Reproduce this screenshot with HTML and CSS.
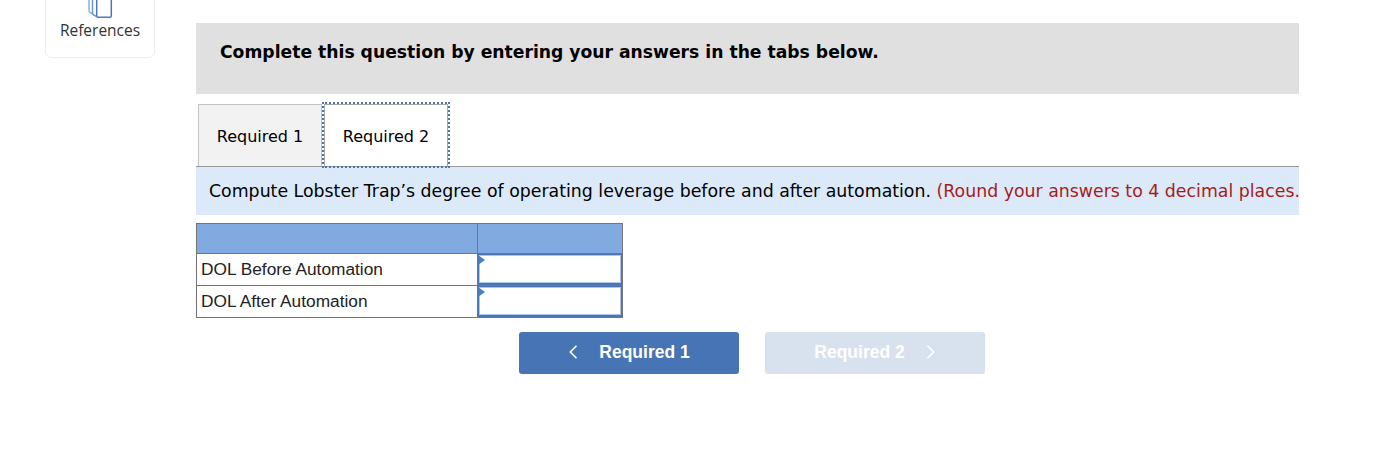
FILE: index.html
```html
<!DOCTYPE html>
<html lang="en">
<head>
<meta charset="utf-8">
<title>Required 2</title>
<link rel="stylesheet" href="styles.css">
</head>
<body>
<div class="page">
  <aside class="side">
    <div class="ref-card">
      <svg class="ref-icon" width="26" height="23" viewBox="0 0 26 23" fill="none" aria-hidden="true">
        <path d="M2 0v13.5q0 1.5 1.5 2.2l2.5 1.3" stroke="#8fb0dc" stroke-width="1.5"/>
        <path d="M5.5 0v16q0 1.5 1.5 2.2l2.5 1.3" stroke="#6d96cf" stroke-width="1.5"/>
        <rect x="9.7" y="-4" width="14.6" height="24.3" rx="1.5" fill="#fff" stroke="#4a78b8" stroke-width="1.5"/>
      </svg>
      <span class="ref-label">References</span>
    </div>
  </aside>
  <main class="main">
    <div class="banner"><h1 class="banner-title">Complete this question by entering your answers in the tabs below.</h1></div>
    <div class="tabs">
      <div class="tab">Required 1</div>
      <div class="tab tab-active">Required 2</div>
    </div>
    <div class="prompt">
      <p class="prompt-text">Compute Lobster Trap’s degree of operating leverage before and after automation. <span class="note">(Round your answers to 4 decimal places.</span></p>
    </div>
    <table class="grid">
      <tr class="head"><th class="c1"></th><th class="c2"></th></tr>
      <tr><td class="c1">DOL Before Automation</td><td class="c2 cell-input"><span class="entry"></span></td></tr>
      <tr><td class="c1">DOL After Automation</td><td class="c2 cell-input"><span class="entry"></span></td></tr>
    </table>
    <div class="nav">
      <button class="btn" type="button"><svg class="chev" width="10" height="14" viewBox="0 0 10 14" fill="none" aria-hidden="true"><path d="M8.5 .8 2.3 7l6.2 6.2" stroke="currentColor" stroke-width="1.6"/></svg>Required 1</button>
      <button class="btn btn-off" type="button">Required 2<svg class="chev" width="10" height="14" viewBox="0 0 10 14" fill="none" aria-hidden="true"><path d="M1.5 .8 7.7 7l-6.2 6.2" stroke="currentColor" stroke-width="1.6"/></svg></button>
    </div>
  </main>
</div>
</body>
</html>
```
FILE: styles.css
```css
html, body {
  margin: 0;
  padding: 0;
  background: #fff;
  overflow: hidden;
}
.page {
  display: flex;
  height: 460px;
  padding-left: 45px;
  box-sizing: border-box;
}
.side {
  width: 151px;
  flex: none;
}
.ref-card {
  width: 110px;
  height: 69px;
  margin-top: -11px;
  box-sizing: border-box;
  border: 1px solid #ececec;
  border-radius: 6px;
  display: flex;
  flex-direction: column;
  align-items: center;
  font: 15.5px "Open Sans", sans-serif;
  color: #333;
}
.ref-icon {
  margin-top: 7px;
  flex: none;
  overflow: hidden;
}
.ref-label {
  line-height: 20px;
}
.main {
  width: 1103px;
  padding-top: 23px;
  flex: none;
  overflow: hidden;
}
.banner {
  height: 71px;
  background: #e0e0e0;
  padding: 18px 24px 0;
  box-sizing: border-box;
}
.banner-title {
  margin: 0;
  font: bold 17.2px/22px "DejaVu Sans", sans-serif;
  color: #000;
}
.tabs {
  display: flex;
  height: 63px;
  margin-top: 10px;
  padding-left: 2px;
  border-bottom: 1px solid #999;
  box-sizing: border-box;
}
.tab {
  width: 124px;
  height: 62px;
  box-sizing: border-box;
  background: #f2f2f2;
  border: 1px solid #c4c4c4;
  border-bottom: 0;
  font: 16px/64px "DejaVu Sans", sans-serif;
  text-align: center;
  color: #000;
}
.tab-active {
  margin-left: 2px;
  background: #fff;
  border-color: #a8a8a8;
  outline: 2px dotted #4a76b4;
}
.prompt {
  height: 48px;
  background: #dce9f8;
  padding-left: 13px;
  white-space: nowrap;
}
.prompt-text {
  margin: 0;
  font: 17.35px/48px "DejaVu Sans", sans-serif;
  color: #000;
}
.note {
  color: #a61c1c;
}
.grid {
  margin-top: 8px;
  border-collapse: collapse;
  table-layout: fixed;
  width: 425px;
  font: 17.3px "Liberation Sans", Arial, sans-serif;
  color: #222;
}
.grid td, .grid th {
  border: 1px solid #757575;
  padding: 0;
}
.c1 { width: 280px; }
.c2 { width: 144px; }
.head th {
  height: 29px;
  background: #81aae0;
}
.grid td {
  height: 31px;
  padding-left: 4px;
  box-sizing: border-box;
}
.grid td.cell-input {
  padding: 0;
  position: relative;
}
.entry {
  display: block;
  height: 31px;
  box-sizing: border-box;
  border: 1px solid #4a76b4;
  border-bottom-width: 2px;
  box-shadow: inset 0 0 0 1px #a9c6ec;
  background: #fff;
}
.entry::before {
  content: "";
  position: absolute;
  left: 0;
  top: 1px;
  border-left: 7px solid #4a7dc4;
  border-top: 5.5px solid transparent;
  border-bottom: 5.5px solid transparent;
}
.nav {
  display: flex;
  gap: 26px;
  margin-top: 14px;
  padding-left: 323px;
}
.btn {
  width: 220px;
  height: 42px;
  border: 0;
  border-radius: 3px;
  background: #4774b4;
  color: #fff;
  font: bold 17.5px "Liberation Sans", Arial, sans-serif;
  display: flex;
  align-items: center;
  justify-content: center;
  gap: 21px;
  padding: 0 0 2px;
}
.btn-off {
  background: #d8e2ee;
}
```
